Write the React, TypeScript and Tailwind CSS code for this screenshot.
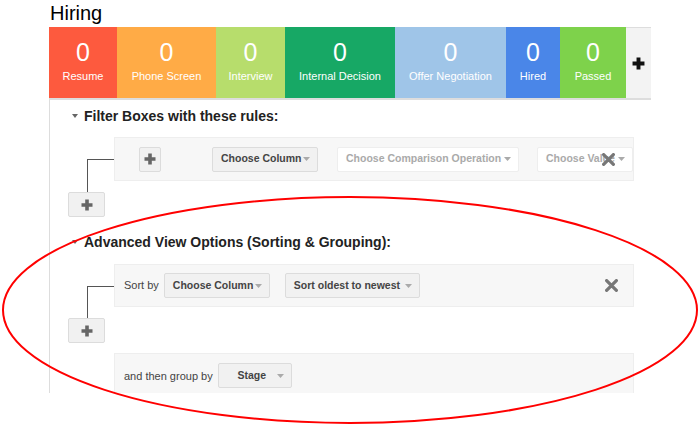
import React from 'react';

const STAGES = [
  { name: 'Resume', color: 'bg-[#fd5a3e]', width: 'w-[68px]' },
  { name: 'Phone Screen', color: 'bg-[#ffab46]', width: 'w-[99px]' },
  { name: 'Interview', color: 'bg-[#b7dd6c]', width: 'w-[69px]' },
  { name: 'Internal Decision', color: 'bg-[#17a865]', width: 'w-[110px]' },
  { name: 'Offer Negotiation', color: 'bg-[#9fc5e8]', width: 'w-[111px]' },
  { name: 'Hired', color: 'bg-[#4a86e8]', width: 'w-[54px]' },
  { name: 'Passed', color: 'bg-[#7ed24b]', width: 'w-[66px]' },
];

function PlusIcon({ size = 12, color = '#666' }: { size?: number; color?: string }) {
  return (
    <svg width={size} height={size} viewBox="0 0 12 12">
      <path d="M6 0.5v11M0.5 6h11" stroke={color} strokeWidth="3.6" />
    </svg>
  );
}

function CloseIcon() {
  return (
    <svg width="13" height="13" viewBox="0 0 12 12">
      <path d="M1.5 1.5l9 9M10.5 1.5l-9 9" stroke="#777" strokeWidth="3" strokeLinecap="round" />
    </svg>
  );
}

function Caret() {
  return (
    <svg className="ml-auto" width="7" height="4" viewBox="0 0 7 4">
      <path d="M0 0h7L3.5 4z" fill="#aaa" />
    </svg>
  );
}

function Select({ label, width, faded, center }: { label: string; width: string; faded?: boolean; center?: boolean }) {
  return (
    <div
      className={`flex h-[25px] shrink-0 items-center rounded-[2px] border pl-[8px] pr-[7px] text-[10.5px] font-bold ${width} ${
        faded ? 'border-[#eee] bg-white text-[#aaa]' : 'border-[#dcdcdc] bg-[#f1f1f1] text-[#444]'
      }`}
    >
      <span className={center ? 'flex-1 text-center' : ''}>{label}</span>
      <Caret />
    </div>
  );
}

function AddButton({ className = '' }: { className?: string }) {
  return (
    <div className={`flex h-[25px] items-center justify-center rounded-[2px] border border-[#dcdcdc] bg-[#f1f1f1] ${className}`}>
      <PlusIcon />
    </div>
  );
}

function SectionTitle({ children }: { children: React.ReactNode }) {
  return (
    <div className="flex h-[18px] items-center pl-[22px] text-[14px] font-bold text-[#222]">
      <svg className="mr-[6px]" width="6" height="4" viewBox="0 0 6 4">
        <path d="M0 0h6L3 4z" fill="#666" />
      </svg>
      {children}
    </div>
  );
}

function RuleBlock({ children, rowH }: { children: React.ReactNode; rowH: number }) {
  return (
    <div className="relative">
      <div className="ml-[64px] flex w-[520px] items-center border border-[#eee] bg-[#f7f7f7]" style={{ height: rowH }}>
        {children}
      </div>
      <div
        className="absolute left-[37px] w-[27px] border-l border-t border-[#555]"
        style={{ top: rowH / 2, height: rowH / 2 + 11 }}
      />
      <AddButton className="ml-[18px] mt-[11px] w-[37px]" />
    </div>
  );
}

export default function App() {
  return (
    <div className="relative h-[426px] w-[700px] overflow-hidden bg-white font-['Liberation_Sans',Arial,sans-serif]">
      <div className="pl-[49px]">
        <h1 className="h-[27px] pl-[1px] pt-[1px] text-[20px] leading-[24px] text-black">Hiring</h1>

        <div className="flex h-[73px] w-[602px] border-b-2 border-[#ddd]">
          {STAGES.map((s) => (
            <div key={s.name} className={`flex flex-col items-center pt-[11px] text-white ${s.color} ${s.width}`}>
              <div className="text-[25px] leading-[29px]">0</div>
              <div className="mt-[2px] whitespace-nowrap text-[11px] leading-[14px]">{s.name}</div>
            </div>
          ))}
          <div className="flex w-[25px] items-center justify-center border-t border-[#ddd] bg-[#f3f3f3]">
            <PlusIcon size={13} color="#111" />
          </div>
        </div>

        <div className="h-[293px] overflow-hidden border-l border-[#ddd] pt-[7px]">
          <SectionTitle>Filter Boxes with these rules:</SectionTitle>
          <div className="mt-[12px]">
            <RuleBlock rowH={44}>
              <AddButton className="ml-[24px] w-[24px]" />
              <div className="ml-[51px]">
                <Select label="Choose Column" width="w-[106px]" />
              </div>
              <div className="ml-[19px]">
                <Select label="Choose Comparison Operation" width="w-[182px]" faded />
              </div>
              <div className="relative ml-[18px]">
                <Select label="Choose Value" width="w-[96px]" faded />
                <div className="absolute left-[65px] top-[6px]">
                  <CloseIcon />
                </div>
              </div>
            </RuleBlock>
          </div>

          <div className="mt-[16px]">
            <SectionTitle>Advanced View Options (Sorting &amp; Grouping):</SectionTitle>
          </div>
          <div className="mt-[13px]">
            <RuleBlock rowH={43}>
              <span className="ml-[9px] text-[11px] text-[#444]">Sort by</span>
              <div className="ml-[5px]">
                <Select label="Choose Column" width="w-[106px]" />
              </div>
              <div className="ml-[15px]">
                <Select label="Sort oldest to newest" width="w-[135px]" />
              </div>
              <div className="ml-auto mr-[15px]">
                <CloseIcon />
              </div>
            </RuleBlock>
          </div>

          <div className="ml-[64px] mt-[10px] flex h-[48px] w-[520px] items-start border border-[#eee] bg-[#f7f7f7] pt-[9px]">
            <span className="ml-[9px] mt-[5px] text-[11px] text-[#444]">and then group by</span>
            <div className="ml-[5px]">
              <Select label="Stage" width="w-[74px]" center />
            </div>
          </div>
        </div>
      </div>

      <svg className="pointer-events-none absolute left-0 top-0" width="700" height="426">
        <ellipse cx="350" cy="310" rx="347" ry="113" fill="none" stroke="#f00" strokeWidth="2" />
      </svg>
    </div>
  );
}
